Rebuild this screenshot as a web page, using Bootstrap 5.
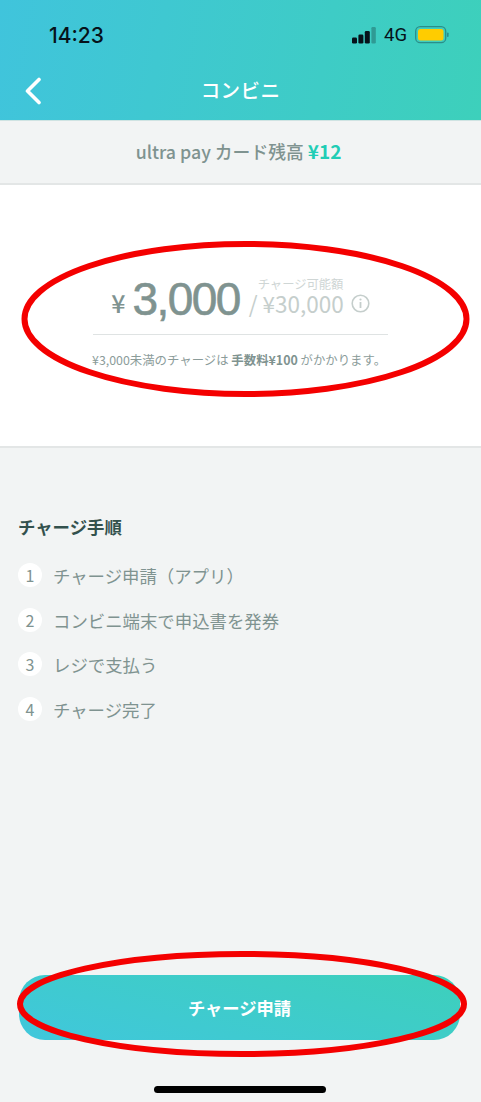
<!DOCTYPE html>
<html lang="ja">
<head>
<meta charset="utf-8">
<title>コンビニ</title>
<link href="https://cdn.jsdelivr.net/npm/bootstrap@5.3.0/dist/css/bootstrap.min.css" rel="stylesheet">
<style>
html,body{margin:0;height:1102px;overflow:hidden}
body{font-family:"Noto Sans CJK JP","Noto Sans",sans-serif;background:#f2f4f4;color:#7f9390;position:relative}
.app-shell{width:481px;height:1102px}
.top-head{height:121px;background:linear-gradient(100deg,#40c4dc,#3dd0bb);border-bottom:1px solid #cfe3e2;flex:none}
.status-row{height:70px;padding:0 32px 0 49px}
.clock{font:500 21px/1 Inter,Roboto,sans-serif;color:#06121a;margin-top:1px}
.net{font:400 18.5px/1 Roboto,Inter,sans-serif;color:#06121a;margin:0 8px 0 8px}
.nav-row{height:50px;padding-top:8px}
.back-ico{left:24px;top:7px}
.head-title{font-size:19.5px;font-weight:500;color:#fff;line-height:1.2;letter-spacing:.4px}
.bal-row{height:64px;flex:none;border-bottom:2px solid #e3e6e6;font-size:17.8px;font-weight:500;color:#7f9390;padding:0 4px 2px 0}
.bal-val{color:#21cdb5;font-size:19px;font-weight:700}
.amt-box{height:263px;flex:none;background:#fff;border-bottom:2px solid #e3e6e6;padding-top:82px}
.amt-inner{width:295px;margin:0 auto}
.amt-top{height:68px;border-bottom:1px solid #dfe3e3;padding-right:4px}
.yen-mark{font:500 25px/1 "Noto Sans CJK JP",sans-serif;color:#7f9390;margin:0 7px 0 4px;padding-top:23px}
.amt-num{font:500 46px/1 "Liberation Sans",sans-serif;color:#7f9390;letter-spacing:-1.6px;padding-top:9px;-webkit-text-stroke:.6px #7f9390}
.lim-box{margin-left:9px}
.lim-cap{font-size:12.3px;line-height:1;color:#cfd6d5;padding-left:9px;margin-top:11px}
.lim-val{font:400 22.5px/1 "Noto Sans CJK JP",sans-serif;color:#c5cecc;margin-top:2px;white-space:nowrap}
.lim-val svg{margin-left:7px}
.fee-note{font-size:12.4px;line-height:1;color:#8b9c9a;margin:19px 0 0 -1px;white-space:nowrap}
.fee-note b{font-weight:700;color:#7f9390}
.step-box{padding:70px 18px 0}
.step-title{font-size:17.4px;font-weight:700;color:#33514d;line-height:1;margin:0 0 28px}
.step-item{height:44.4px;font-size:17.4px;color:#7f9390;line-height:1}
.step-num{width:24px;height:24px;background:#fff;border-radius:50%;font-size:16px;margin-right:11px;flex:none}
.cta-wrap{padding:0 21px 0 19px;margin-top:auto}
.cta-btn{height:65px;width:100%;border:0;border-radius:26px;background:linear-gradient(195deg,#3dd0bb,#40c7dc);color:#fff;font-size:17.3px;font-weight:700}
.home-wrap{height:62px;padding-top:46px;flex:none}
.home-bar{width:172px;height:7px;background:#000;border-radius:4px;margin-left:154px}
.mark-layer{position:absolute;left:0;top:0;pointer-events:none}
</style>
</head>
<body>
<div class="app-shell d-flex flex-column">
  <header class="top-head">
    <div class="status-row d-flex align-items-center justify-content-between">
      <span class="clock">14:23</span>
      <span class="d-flex align-items-center">
        <svg width="24" height="17" viewBox="0 0 24 17"><rect x="0" y="10.500" width="5" height="6" rx="1.300" fill="#06121a"/><rect x="6.400" y="7.500" width="5" height="9" rx="1.300" fill="#06121a"/><rect x="12.800" y="4" width="5" height="12.500" rx="1.300" fill="#06121a"/><rect x="19.400" y="0" width="4.400" height="16.500" rx="1.200" fill="#2f9a94"/></svg>
        <span class="net">4G</span>
        <svg width="34" height="18" viewBox="0 0 34 18"><rect x=".7" y=".7" width="30" height="16" rx="4.500" fill="none" stroke="#2b8e8a" stroke-width="1.300"/><rect x="3" y="3" width="25.500" height="11.600" rx="2.500" fill="#ffcc00"/><rect x="32" y="6.500" width="1.600" height="4.600" rx=".8" fill="#2b8e8a"/></svg>
      </span>
    </div>
    <div class="nav-row position-relative d-flex justify-content-center">
      <svg class="back-ico position-absolute" width="18" height="28" viewBox="0 0 18 28"><path d="M15 2.500 3.500 14 15 25.500" fill="none" stroke="#fff" stroke-width="3.600" stroke-linecap="round" stroke-linejoin="round"/></svg>
      <span class="head-title">コンビニ</span>
    </div>
  </header>

  <div class="bal-row d-flex align-items-center justify-content-center gap-1">
    <span>ultra pay カード残高</span><span class="bal-val">¥12</span>
  </div>

  <section class="amt-box">
    <div class="amt-inner">
      <div class="amt-top d-flex justify-content-center">
        <span class="yen-mark">¥</span>
        <span class="amt-num">3,000</span>
        <div class="lim-box">
          <div class="lim-cap">チャージ可能額</div>
          <div class="lim-val d-flex align-items-center">/ ¥30,000
            <svg width="19" height="19" viewBox="0 0 19 19"><circle cx="9.500" cy="9.500" r="8.300" fill="none" stroke="#c5cecc" stroke-width="1.600"/><rect x="8.600" y="8" width="1.800" height="6" fill="#c5cecc"/><circle cx="9.500" cy="5.500" r="1.100" fill="#c5cecc"/></svg>
          </div>
        </div>
      </div>
      <p class="fee-note mb-0">¥3,000未満のチャージは <b>手数料¥100</b> がかかります。</p>
    </div>
  </section>

  <section class="step-box">
    <h2 class="step-title">チャージ手順</h2>
    <div class="step-item d-flex align-items-start"><span class="step-num d-flex align-items-center justify-content-center">1</span><span class="pt-1">チャージ申請（アプリ）</span></div>
    <div class="step-item d-flex align-items-start"><span class="step-num d-flex align-items-center justify-content-center">2</span><span class="pt-1">コンビニ端末で申込書を発券</span></div>
    <div class="step-item d-flex align-items-start"><span class="step-num d-flex align-items-center justify-content-center">3</span><span class="pt-1">レジで支払う</span></div>
    <div class="step-item d-flex align-items-start"><span class="step-num d-flex align-items-center justify-content-center">4</span><span class="pt-1">チャージ完了</span></div>
  </section>

  <div class="cta-wrap"><button class="cta-btn btn" type="button">チャージ申請</button></div>
  <div class="home-wrap"><div class="home-bar"></div></div>
</div>

<svg class="mark-layer" width="481" height="1102" viewBox="0 0 481 1102">
  <ellipse cx="245.500" cy="319" rx="221" ry="75" fill="none" stroke="#f40000" stroke-width="6"/>
  <ellipse cx="242" cy="1004" rx="222" ry="50" fill="none" stroke="#f40000" stroke-width="6"/>
</svg>
</body>
</html>
